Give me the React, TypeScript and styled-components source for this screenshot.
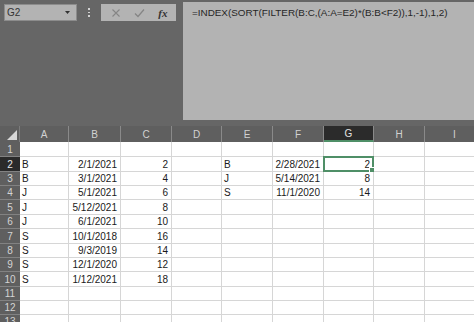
import React from "react";
import styled, { createGlobalStyle } from "styled-components";

const Global = createGlobalStyle`
  html, body { margin: 0; padding: 0; background: #666666; }
  body { width: 474px; height: 322px; overflow: hidden; font-family: "Liberation Sans", Arial, sans-serif; }
  #root { width: 474px; height: 322px; }
`;

const Page = styled.div`
  width: 474px;
  height: 322px;
  background: #666666;
  overflow: hidden;
  display: flex;
  flex-direction: column;
`;

const TopBar = styled.div`
  display: flex;
  height: 120px;
  flex-shrink: 0;
`;

const LeftTools = styled.div`
  width: 183px;
  flex-shrink: 0;
  display: flex;
  align-items: flex-start;
  padding: 4px 0 0 4px;
  box-sizing: border-box;
`;

const NameBox = styled.div`
  width: 73px;
  height: 17px;
  box-sizing: border-box;
  background: #b3b3b3;
  border: 1px solid #8c8c8c;
  display: flex;
  align-items: center;
  justify-content: space-between;
  padding: 0 6px 0 2px;
  font-size: 10px;
  color: #333333;
`;

const Dots = styled.div`
  width: 24px;
  height: 17px;
  display: flex;
  flex-direction: column;
  align-items: center;
  justify-content: center;
  gap: 2px;
`;

const Dot = styled.span`
  width: 1.5px;
  height: 1.5px;
  background: #d2d2d2;
  display: block;
`;

const ButtonsBox = styled.div`
  width: 75px;
  height: 17px;
  background: #b3b3b3;
  display: flex;
  align-items: center;
  justify-content: space-around;
  padding: 0 2px 0 4px;
  box-sizing: border-box;
`;

const Fx = styled.span`
  font-family: "Liberation Serif", "Times New Roman", serif;
  font-style: italic;
  font-size: 11px;
  color: #333333;
  font-weight: bold;
`;

const FormulaBox = styled.div`
  flex: 1;
  margin-top: 2px;
  height: 118px;
  background: #b3b3b3;
  padding: 5px 9px;
  box-sizing: border-box;
  font-size: 9.9px;
  line-height: 12px;
  color: #262626;
  white-space: nowrap;
`;

const Grid = styled.div`
  margin-top: 6px;
  display: grid;
  grid-template-columns: 20px 49px 52px 51px 50px 51px 51px 50px 51px 60px;
  grid-template-rows: 16px 15px 15px 14px 14px 15px 14px 15px 14px 14px 15px 14px 14px 14px;
`;

const Corner = styled.div`
  background: #5f5f5f;
  border-right: 1px solid #7c7c7c;
  box-sizing: border-box;
  display: flex;
  align-items: flex-end;
  justify-content: flex-end;
  padding: 0 2px 2px 0;
`;

const ColHeader = styled.div<{ $selected?: boolean }>`
  background: ${(p) => (p.$selected ? "#2b2b2b" : "#5f5f5f")};
  border-right: 1px solid #8a8a8a;
  border-bottom: ${(p) => (p.$selected ? "2px solid #4f8f67" : "none")};
  box-sizing: border-box;
  color: ${(p) => (p.$selected ? "#e2e2e2" : "#d2d2d2")};
  font-size: 10px;
  display: flex;
  align-items: center;
  justify-content: center;
`;

const RowHeader = styled.div<{ $selected?: boolean }>`
  background: ${(p) => (p.$selected ? "#2a2a2a" : "#5f5f5f")};
  border-bottom: 1px solid #828282;
  box-sizing: border-box;
  color: ${(p) => (p.$selected ? "#e6e6e6" : "#d4d4d4")};
  font-size: 10px;
  display: flex;
  align-items: center;
  justify-content: center;
`;

const Cell = styled.div<{ $align?: "left" | "right" }>`
  position: relative;
  background: #ffffff;
  border-right: 1px solid #d6d6d6;
  border-bottom: 1px solid #d6d6d6;
  box-sizing: border-box;
  font-size: 10px;
  color: #1a1a1a;
  display: flex;
  align-items: center;
  justify-content: ${(p) => (p.$align === "right" ? "flex-end" : "flex-start")};
  padding: 0 3px 0 2px;
  white-space: nowrap;
`;

const Selection = styled.div`
  position: absolute;
  left: -1px;
  top: -1px;
  right: -1px;
  bottom: -1px;
  border: 2px solid #4f8f67;
  pointer-events: none;
`;

const Handle = styled.div`
  position: absolute;
  right: -3px;
  bottom: -3px;
  width: 4px;
  height: 4px;
  background: #4f8f67;
  border: 1px solid #ffffff;
`;

const columns = ["A", "B", "C", "D", "E", "F", "G", "H", "I"];
const rightCols = new Set(["B", "C", "F", "G"]);

const data: Record<number, Record<string, string>> = {
  2: { A: "B", B: "2/1/2021", C: "2", E: "B", F: "2/28/2021", G: "2" },
  3: { A: "B", B: "3/1/2021", C: "4", E: "J", F: "5/14/2021", G: "8" },
  4: { A: "J", B: "5/1/2021", C: "6", E: "S", F: "11/1/2020", G: "14" },
  5: { A: "J", B: "5/12/2021", C: "8" },
  6: { A: "J", B: "6/1/2021", C: "10" },
  7: { A: "S", B: "10/1/2018", C: "16" },
  8: { A: "S", B: "9/3/2019", C: "14" },
  9: { A: "S", B: "12/1/2020", C: "12" },
  10: { A: "S", B: "1/12/2021", C: "18" },
};

const rows = Array.from({ length: 13 }, (_, i) => i + 1);

export default function App() {
  return (
    <Page>
      <Global />
      <TopBar>
        <LeftTools>
          <NameBox>
            <span>G2</span>
            <svg width="5" height="3" viewBox="0 0 5 3">
              <polygon points="0,0 5,0 2.5,3" fill="#333" />
            </svg>
          </NameBox>
          <Dots>
            <Dot />
            <Dot />
            <Dot />
          </Dots>
          <ButtonsBox>
            <svg width="10" height="10" viewBox="0 0 10 10">
              <path d="M1.5 1.5 L8.5 8.5 M8.5 1.5 L1.5 8.5" stroke="#858585" strokeWidth="1.1" />
            </svg>
            <svg width="11" height="10" viewBox="0 0 11 10">
              <path d="M1 5.5 L4 8.5 L10 1.5" stroke="#858585" strokeWidth="1.2" fill="none" />
            </svg>
            <Fx>fx</Fx>
          </ButtonsBox>
        </LeftTools>
        <FormulaBox>=INDEX(SORT(FILTER(B:C,(A:A=E2)*(B:B&lt;F2)),1,-1),1,2)</FormulaBox>
      </TopBar>
      <Grid>
        <Corner>
          <svg width="10" height="10" viewBox="0 0 10 10">
            <polygon points="10,0 10,10 0,10" fill="#d8d8d8" />
          </svg>
        </Corner>
        {columns.map((c) => (
          <ColHeader key={c} $selected={c === "G"}>
            {c}
          </ColHeader>
        ))}
        {rows.map((r) => (
          <React.Fragment key={r}>
            <RowHeader $selected={r === 2}>{r}</RowHeader>
            {columns.map((c) => (
              <Cell key={c} $align={rightCols.has(c) ? "right" : "left"}>
                {data[r]?.[c] ?? ""}
                {r === 2 && c === "G" && (
                  <Selection>
                    <Handle />
                  </Selection>
                )}
              </Cell>
            ))}
          </React.Fragment>
        ))}
      </Grid>
    </Page>
  );
}
